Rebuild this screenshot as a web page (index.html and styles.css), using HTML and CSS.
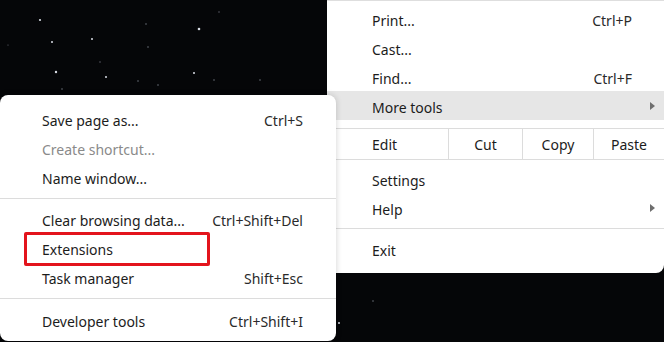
FILE: index.html
```html
<!DOCTYPE html>
<html>
<head>
<meta charset="utf-8">
<link rel="stylesheet" href="styles.css">
</head>
<body>
<div class="desk">
  <svg class="stars" width="664" height="342" viewBox="0 0 664 342">
    <g fill="#d8dce4">
      <circle cx="40" cy="20" r="1.1"/>
      <circle cx="52" cy="42" r="1"/>
      <circle cx="92" cy="39" r="1"/>
      <circle cx="56" cy="72" r="1.2"/>
      <circle cx="106" cy="77" r="1"/>
      <circle cx="199" cy="29" r="1.3"/>
      <circle cx="194" cy="73" r="1"/>
      <circle cx="339" cy="323" r="1"/>
    </g>
    <g fill="#6a6e78">
      <circle cx="146" cy="24" r="0.8"/>
      <circle cx="148" cy="47" r="0.8"/>
      <circle cx="158" cy="85" r="0.8"/>
      <circle cx="214" cy="80" r="0.8"/>
      <circle cx="62" cy="89" r="0.8"/>
      <circle cx="260" cy="80" r="0.8"/>
      <circle cx="138" cy="81" r="0.8"/>
      <circle cx="100" cy="62" r="0.7"/>
      <circle cx="219" cy="12" r="0.7"/>
      <circle cx="373" cy="301" r="0.8"/>
      <circle cx="8" cy="45" r="0.6"/>
    </g>
  </svg>

  <div class="menu menu-main">
    <div class="item"><span>Print...</span><span class="key">Ctrl+P</span></div>
    <div class="item"><span>Cast...</span></div>
    <div class="item"><span>Find...</span><span class="key">Ctrl+F</span></div>
    <div class="item active"><span>More tools</span><span class="arrow"></span></div>
    <div class="edit-row">
      <span class="edit-label">Edit</span>
      <span class="cell cell-cut">Cut</span>
      <span class="cell">Copy</span>
      <span class="cell">Paste</span>
    </div>
    <div class="item item-after-edit"><span>Settings</span></div>
    <div class="item has-sub"><span>Help</span><span class="arrow"></span></div>
    <div class="sep sep-main"></div>
    <div class="item"><span>Exit</span></div>
  </div>

  <div class="menu menu-sub">
    <div class="item"><span>Save page as...</span><span class="key">Ctrl+S</span></div>
    <div class="item disabled"><span>Create shortcut...</span></div>
    <div class="item"><span>Name window...</span></div>
    <div class="sep sep-sub1"></div>
    <div class="item"><span>Clear browsing data...</span><span class="key">Ctrl+Shift+Del</span></div>
    <div class="item"><span>Extensions</span></div>
    <div class="item"><span>Task manager</span><span class="key">Shift+Esc</span></div>
    <div class="sep sep-sub2"></div>
    <div class="item"><span>Developer tools</span><span class="key">Ctrl+Shift+I</span></div>
  </div>

  <div class="callout"></div>
</div>
</body>
</html>
```

FILE: styles.css
```css
* { box-sizing: border-box; }

html, body {
  margin: 0;
  padding: 0;
}

body {
  width: 664px;
  height: 342px;
  overflow: hidden;
  background: #050608;
  font-family: "Noto Sans", "Open Sans", sans-serif;
  font-size: 14px;
  color: #1c1c1c;
}

.desk {
  position: relative;
  width: 664px;
  height: 342px;
  overflow: hidden;
}

.stars {
  position: absolute;
  left: 0;
  top: 0;
}

.menu {
  position: absolute;
  background: #ffffff;
}

.menu-main {
  left: 327px;
  top: 0;
  width: 337px;
  border-top: 1px solid #dedede;
  padding-top: 3px;
  padding-bottom: 10px;
  border-radius: 0 0 8px 8px;
}

.menu-sub {
  left: 0;
  top: 95px;
  width: 336px;
  padding-top: 9px;
  padding-bottom: 7px;
  border-radius: 8px;
  box-shadow: 0 0 6px rgba(0, 0, 0, 0.18);
}

.item {
  height: 29px;
  display: flex;
  align-items: center;
  justify-content: space-between;
  line-height: 1;
  padding-top: 4px;
}

.menu-main .item {
  padding-left: 45px;
  padding-right: 32px;
}

.menu-sub .item {
  padding-left: 42px;
  padding-right: 33px;
}

.menu-main .item.active,
.menu-main .item.has-sub {
  padding-right: 9px;
}

.item.active {
  background: #e6e6e6;
}

.item.disabled {
  color: #8a8a8a;
}

.key {
  color: #2a2a2a;
}

.arrow {
  width: 0;
  height: 0;
  border-top: 4.5px solid transparent;
  border-bottom: 4.5px solid transparent;
  border-left: 5px solid #6e6e6e;
  margin-top: -3px;
}

.edit-row {
  margin-top: 8px;
  height: 32px;
  display: flex;
  align-items: stretch;
  border-top: 1px solid #dcdcdc;
  border-bottom: 1px solid #dcdcdc;
}

.edit-label {
  flex: 1;
  display: flex;
  align-items: center;
  padding-left: 45px;
}

.cell {
  width: 71px;
  display: flex;
  align-items: center;
  justify-content: center;
  border-left: 1px solid #dcdcdc;
}

.cell-cut {
  width: 74px;
}

.item-after-edit {
  margin-top: 4px;
}

.sep {
  height: 1px;
  background: #dcdcdc;
}

.sep-main {
  margin: 6px 0 5px;
}

.sep-sub1 {
  margin: 7px 0 5px;
}

.sep-sub2 {
  margin: 7px 0 6px;
}

.callout {
  position: absolute;
  left: 24px;
  top: 232px;
  width: 186px;
  height: 34px;
  border: 3px solid #e3141c;
  border-radius: 2px;
}
```
